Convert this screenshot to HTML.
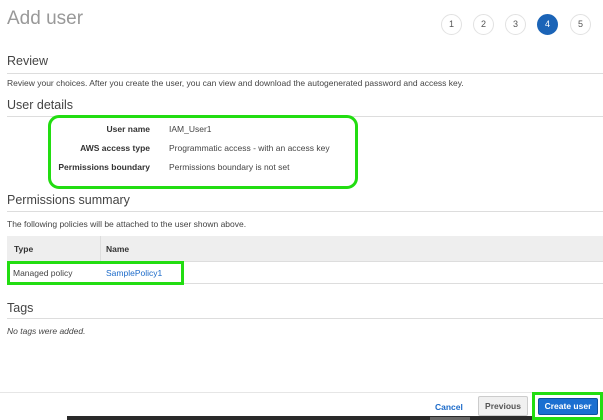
<!DOCTYPE html>
<html><head><style>
*{margin:0;padding:0;box-sizing:border-box}
body{width:603px;height:420px;background:#fff;font-family:"Liberation Sans",sans-serif;position:relative;overflow:hidden;color:#444}
.a{position:absolute;white-space:nowrap}
.h{font-size:12.5px;color:#444}
.line{position:absolute;left:7px;right:0;height:1px;background:#ddd}
.c{position:absolute;width:21px;height:21px;border-radius:50%;border:1px solid #e2e2e2;font-size:9px;text-align:center;line-height:19px;color:#555;top:14px}
.s{font-size:8.5px;color:#444}
.lbl{font-size:8.5px;font-weight:bold;color:#333;text-align:right;width:100px}
</style></head><body>
<div class="a" style="left:7px;top:8px;font-size:19px;color:#999">Add user</div>
<div class="c" style="left:441px">1</div>
<div class="c" style="left:473px">2</div>
<div class="c" style="left:505px">3</div>
<div class="c" style="left:537px;background:#1b64b7;border-color:#1b64b7;color:#fff">4</div>
<div class="c" style="left:570px">5</div>

<div class="a h" style="left:7px;top:54px">Review</div>
<div class="line" style="top:73px"></div>
<div class="a s" style="left:7px;top:78px">Review your choices. After you create the user, you can view and download the autogenerated password and access key.</div>
<div class="a h" style="left:7px;top:98px">User details</div>
<div class="line" style="top:116px"></div>
<div class="a" style="left:48px;top:115px;width:310px;height:74px;border:3px solid #22dd11;border-radius:11px"></div>
<div class="a lbl" style="left:50px;top:124px">User name</div>
<div class="a s" style="left:169px;top:124px">IAM_User1</div>
<div class="a lbl" style="left:50px;top:143px">AWS access type</div>
<div class="a s" style="left:169px;top:143px">Programmatic access - with an access key</div>
<div class="a lbl" style="left:50px;top:162px">Permissions boundary</div>
<div class="a s" style="left:169px;top:162px">Permissions boundary is not set</div>

<div class="a h" style="left:7px;top:193px">Permissions summary</div>
<div class="line" style="top:211px"></div>
<div class="a s" style="left:7px;top:219px">The following policies will be attached to the user shown above.</div>
<div class="a" style="left:7px;top:236px;right:0;height:26px;background:#eeeeee;border-bottom:1px solid #ddd"></div>
<div class="a" style="left:100px;top:236px;width:1px;height:26px;background:#ddd"></div>
<div class="a s" style="left:14px;top:244px;font-weight:bold;color:#333">Type</div>
<div class="a s" style="left:106px;top:244px;font-weight:bold;color:#333">Name</div>
<div class="line" style="top:283px"></div>
<div class="a" style="left:7px;top:261px;width:177px;height:24px;border:3px solid #22dd11"></div>
<div class="a s" style="left:13px;top:268px">Managed policy</div>
<div class="a s" style="left:106px;top:268px;color:#1b6ac9">SamplePolicy1</div>

<div class="a h" style="left:7px;top:301px">Tags</div>
<div class="line" style="top:318px"></div>
<div class="a s" style="left:7px;top:326px;font-style:italic">No tags were added.</div>

<div class="a" style="left:0;right:0;top:392px;height:1px;background:#e6e6e6"></div>
<div class="a s" style="left:435px;top:402px;color:#1b6ac9;font-weight:bold">Cancel</div>
<div class="a" style="left:478px;top:396px;width:50px;height:20px;background:#f0f0f0;border:1px solid #ccc;border-radius:2px;font-size:8.5px;font-weight:bold;color:#555;text-align:center;line-height:18px">Previous</div>
<div class="a" style="left:532px;top:392px;width:71px;height:28px;border:3px solid #22dd11"></div>
<div class="a" style="left:538px;top:398px;width:60px;height:17px;background:#1a6fd1;border:1px solid #0d4f9e;border-radius:2px;font-size:8.5px;font-weight:bold;color:#fff;text-align:center;line-height:15px">Create user</div>
<div class="a" style="left:67px;top:416px;width:465px;height:4px;background:#2a2a2a"></div>
<div class="a" style="left:430px;top:417px;width:40px;height:3px;background:#666"></div>
</body></html>
